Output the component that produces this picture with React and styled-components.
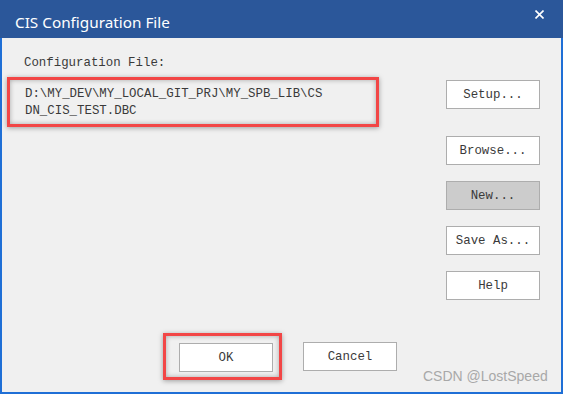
import React from 'react';
import styled, { createGlobalStyle } from 'styled-components';

const GlobalStyle = createGlobalStyle`
  html, body {
    margin: 0;
    padding: 0;
    width: 563px;
    height: 394px;
    overflow: hidden;
    background: #f0f0f0;
  }
`;

const Window = styled.div`
  position: relative;
  width: 563px;
  height: 394px;
  display: flex;
  flex-direction: column;
  box-sizing: border-box;
  font-family: "Liberation Mono", "DejaVu Sans Mono", monospace;
`;

const TitleBar = styled.div`
  height: 38px;
  flex: none;
  background: #2b579a;
  display: flex;
  justify-content: space-between;
  align-items: flex-start;
  padding: 0 19px 0 15px;
  box-sizing: border-box;
`;

const Title = styled.div`
  font-family: "Noto Sans", "Open Sans", sans-serif;
  font-size: 15.3px;
  line-height: 20px;
  padding-top: 12px;
  color: #ffffff;
`;

const CloseButton = styled.div`
  margin-top: 10px;
  width: 9px;
  height: 9px;
  display: flex;
`;

const Body = styled.div`
  flex: 1;
  display: flex;
  flex-direction: column;
  background: #f0f0f0;
  border: 2px solid #1f6fd6;
  border-top: none;
`;

const TopRow = styled.div`
  display: flex;
  justify-content: space-between;
`;

const LeftCol = styled.div`
  margin-left: 5px;
  padding-top: 18px;
  display: flex;
  flex-direction: column;
`;

const Label = styled.div`
  margin-left: 17px;
  font-size: 12.4px;
  line-height: 15px;
  color: #3a3a3a;
`;

const Highlight = styled.div`
  box-sizing: border-box;
  border: 3px solid #f24646;
  box-shadow: 0 1px 5px rgba(0, 0, 0, 0.35), inset 0 0 5px rgba(0, 0, 0, 0.3);
`;

const PathField = styled(Highlight)`
  margin-top: 6px;
  width: 372px;
  height: 50px;
  padding: 6px 0 0 15px;
`;

const PathText = styled.div`
  width: 40ch;
  font-size: 12.4px;
  line-height: 17px;
  color: #3a3a3a;
  word-break: break-all;
`;

const RightCol = styled.div`
  margin: 42px 21px 0 0;
  display: flex;
  flex-direction: column;
  gap: 16px;
`;

const Button = styled.button`
  width: 94px;
  height: 29px;
  margin-bottom: ${p => (p.$extra ? '11px' : '0')};
  box-sizing: border-box;
  padding: 0;
  border: 1px solid #adadad;
  background: ${p => (p.$active ? '#cccccc' : '#ffffff')};
  font-family: "Liberation Mono", "DejaVu Sans Mono", monospace;
  font-size: 12.4px;
  color: #3a3a3a;
  cursor: default;
`;

const Footer = styled.div`
  margin-top: auto;
  padding: 0 0 12px 161px;
  display: flex;
  align-items: center;
  gap: 21px;
`;

const OkFrame = styled(Highlight)`
  padding: 7px 6px 5px 13px;
  display: flex;
`;

const Watermark = styled.div`
  position: absolute;
  left: 423px;
  top: 368px;
  font-family: "Liberation Sans", Arial, sans-serif;
  font-size: 14px;
  line-height: 16px;
  color: #a8a8a8;
  white-space: nowrap;
`;

export default function App() {
  return (
    <Window>
      <GlobalStyle />
      <TitleBar>
        <Title>CIS Configuration File</Title>
        <CloseButton>
          <svg width="9" height="9" viewBox="0 0 9 9">
            <path d="M0.5 0.5 L8.5 8.5 M8.5 0.5 L0.5 8.5" stroke="#fff" strokeWidth="1.6" />
          </svg>
        </CloseButton>
      </TitleBar>
      <Body>
        <TopRow>
          <LeftCol>
            <Label>Configuration File:</Label>
            <PathField>
              <PathText>D:\MY_DEV\MY_LOCAL_GIT_PRJ\MY_SPB_LIB\CSDN_CIS_TEST.DBC</PathText>
            </PathField>
          </LeftCol>
          <RightCol>
            <Button $extra>Setup...</Button>
            <Button>Browse...</Button>
            <Button $active>New...</Button>
            <Button>Save As...</Button>
            <Button>Help</Button>
          </RightCol>
        </TopRow>
        <Footer>
          <OkFrame>
            <Button>OK</Button>
          </OkFrame>
          <Button>Cancel</Button>
        </Footer>
      </Body>
      <Watermark>CSDN @LostSpeed</Watermark>
    </Window>
  );
}
